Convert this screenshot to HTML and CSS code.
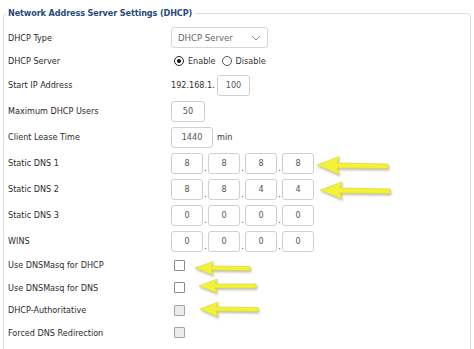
FILE: index.html
```
<!DOCTYPE html>
<html>
<head>
<meta charset="utf-8">
<link rel="stylesheet" href="styles.css">
</head>
<body>
<div class="page">
  <fieldset class="box">
    <legend>Network Address Server Settings (DHCP)</legend>
    <div class="row r1">
      <div class="lbl">DHCP Type</div>
      <div class="ctl">
        <div class="select"><span>DHCP Server</span>
          <svg class="chev" width="10" height="6" viewBox="0 0 10 6"><polyline points="1,1 5,5 9,1" fill="none" stroke="#999" stroke-width="1"/></svg>
        </div>
      </div>
    </div>
    <div class="row r2">
      <div class="lbl">DHCP Server</div>
      <div class="ctl radios">
        <span class="radio on"></span><span class="rtxt">Enable</span>
        <span class="radio"></span><span class="rtxt">Disable</span>
      </div>
    </div>
    <div class="row">
      <div class="lbl">Start IP Address</div>
      <div class="ctl"><span class="pre">192.168.1.</span><div class="field w33">100</div></div>
    </div>
    <div class="row">
      <div class="lbl">Maximum DHCP Users</div>
      <div class="ctl"><div class="field w34">50</div></div>
    </div>
    <div class="row">
      <div class="lbl">Client Lease Time</div>
      <div class="ctl"><div class="field w42">1440</div><span class="unit">min</span></div>
    </div>
    <div class="row">
      <div class="lbl">Static DNS 1</div>
      <div class="ctl ip"><div class="field oct">8</div><span class="dot">.</span><div class="field oct">8</div><span class="dot">.</span><div class="field oct">8</div><span class="dot">.</span><div class="field oct">8</div></div>
    </div>
    <div class="row">
      <div class="lbl">Static DNS 2</div>
      <div class="ctl ip"><div class="field oct">8</div><span class="dot">.</span><div class="field oct">8</div><span class="dot">.</span><div class="field oct">4</div><span class="dot">.</span><div class="field oct">4</div></div>
    </div>
    <div class="row">
      <div class="lbl">Static DNS 3</div>
      <div class="ctl ip"><div class="field oct">0</div><span class="dot">.</span><div class="field oct">0</div><span class="dot">.</span><div class="field oct">0</div><span class="dot">.</span><div class="field oct">0</div></div>
    </div>
    <div class="row">
      <div class="lbl">WINS</div>
      <div class="ctl ip"><div class="field oct">0</div><span class="dot">.</span><div class="field oct">0</div><span class="dot">.</span><div class="field oct">0</div><span class="dot">.</span><div class="field oct">0</div></div>
    </div>
    <div class="row cbrow">
      <div class="lbl">Use DNSMasq for DHCP</div>
      <div class="ctl"><span class="cb"></span></div>
    </div>
    <div class="row cbrow">
      <div class="lbl">Use DNSMasq for DNS</div>
      <div class="ctl"><span class="cb"></span></div>
    </div>
    <div class="row cbrow">
      <div class="lbl">DHCP-Authoritative</div>
      <div class="ctl"><span class="cb dis"></span></div>
    </div>
    <div class="row cbrow">
      <div class="lbl">Forced DNS Redirection</div>
      <div class="ctl"><span class="cb dis"></span></div>
    </div>
  </fieldset>
  <svg class="arrows" width="474" height="349" viewBox="0 0 474 349">
    <defs>
      <filter id="sh" x="-20%" y="-50%" width="140%" height="200%">
        <feDropShadow dx="1" dy="1.5" stdDeviation="1" flood-color="#777" flood-opacity="0.55"/>
      </filter>
    </defs>
    <g fill="#f3f237" stroke="#dcd622" stroke-width="0.6" filter="url(#sh)">
      <polygon points="317,165 339,156.5 337,163 388,164 388,168.5 337,168 339,174.5"/>
      <polygon points="320,190 342,182 340,188 390,189 390,193.5 340,193 342,199"/>
      <polygon points="195,268 213,261.5 211,266 250,266.5 250,270.5 211,270 213,275"/>
      <polygon points="199,286 217,279 215,284 256,284 256,288 215,288 217,293"/>
      <polygon points="200,309 218,302 216,307 258,307.5 258,311.5 216,311 218,317"/>
    </g>
  </svg>
</div>
</body>
</html>
```

FILE: styles.css
```
* { box-sizing: border-box; }
html, body { margin: 0; padding: 0; background: #fff; }
body {
  font-family: "DejaVu Sans", "Liberation Sans", sans-serif;
  font-stretch: condensed;
  font-size: 9px;
  color: #2b2b2b;
}
.page {
  position: relative;
  width: 474px;
  height: 349px;
  overflow: hidden;
  padding-top: 7px;
}
.box {
  margin: 0 3px;
  border: 1px solid #dcdcdc;
  border-radius: 4px;
  padding: 6px 0 0 4px;
  height: 400px;
  min-width: 0;
}
.box legend {
  font-weight: bold;
  font-size: 9px;
  line-height: 12px;
  color: #274a7d;
  padding: 0 3px 0 2px;
  margin-left: -2px;
  letter-spacing: -0.1px;
}
.row {
  display: flex;
  align-items: center;
  height: 26px;
}
.row.r1 { height: 25px; }
.row.r2 { height: 22px; }
.row.cbrow { height: 22.5px; }
.lbl { width: 163px; flex: none; }
.ctl { display: flex; align-items: center; }
.field {
  height: 21px;
  border: 1px solid #cfcfcf;
  border-radius: 3px;
  display: flex;
  align-items: center;
  justify-content: center;
  color: #555;
  background: #fff;
}
.w33 { width: 33px; }
.w34 { width: 34px; }
.w42 { width: 42px; }
.oct { width: 32px; }
.dot {
  width: 5px;
  text-align: center;
  align-self: flex-end;
  line-height: 12px;
  color: #444;
}
.pre { width: 46px; color: #333; }
.unit { margin-left: 4px; color: #333; }
.select {
  position: relative;
  width: 97px;
  height: 21px;
  border: 1px solid #d6d6d6;
  border-radius: 3px;
  display: flex;
  align-items: center;
  padding-left: 6px;
  color: #666;
  font-size: 9.5px;
}
.chev { position: absolute; right: 6px; top: 7px; }
.radios { padding-left: 3px; }
.radio {
  width: 10px;
  height: 10px;
  border: 1px solid #555;
  border-radius: 50%;
  display: flex;
  align-items: center;
  justify-content: center;
  background: #fff;
}
.radio.on { border-color: #222; }
.radio.on::after {
  content: "";
  width: 4px;
  height: 4px;
  border-radius: 50%;
  background: #111;
}
.rtxt { margin-left: 4px; margin-right: 6px; color: #333; }
.cb {
  margin-left: 3px;
  width: 11px;
  height: 11px;
  border: 1px solid #8a8a8a;
  border-radius: 1px;
  background: #fff;
}
.cb.dis { background: #ececec; border-color: #a3a3a3; }
.arrows { position: absolute; left: 0; top: 0; pointer-events: none; }
```
